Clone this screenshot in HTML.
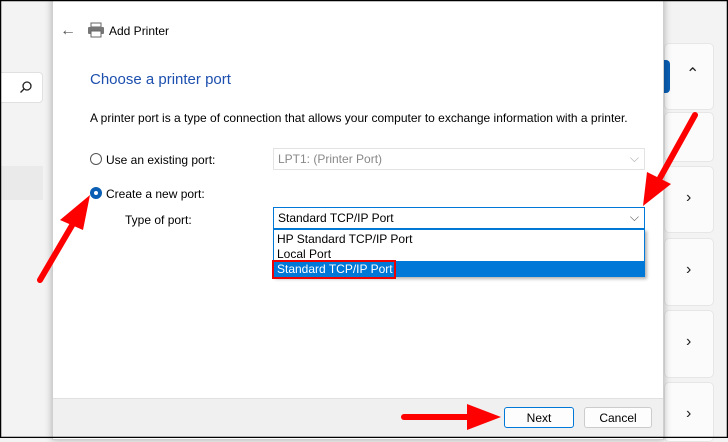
<!DOCTYPE html>
<html><head><style>
*{margin:0;padding:0;box-sizing:border-box}
body{width:728px;height:438px;overflow:hidden;background:#f3f3f3;font-family:"Liberation Sans",sans-serif;position:relative;font-size:12px;color:#000}
.abs{position:absolute}
.card{position:absolute;left:664px;width:50px;background:#fbfbfb;border:1px solid #e6e6e6;border-radius:5px}
.chev{position:absolute;left:686px;font-size:16px;color:#222}
.dlg{position:absolute;left:52px;top:-2px;width:612px;height:442px;background:#fff;border:1px solid #cfcfcf;box-shadow:-2px 0 6px rgba(0,0,0,.15),2px 0 6px rgba(0,0,0,.15)}
.sel{position:absolute;left:273px;width:372px;height:22px;border:1px solid #e3e3e3;padding:3px 4px;color:#888}
</style></head><body>
<div class="abs" style="left:0;top:72px;width:43px;height:31px;background:#fff;border:1px solid #e0e0e0;border-radius:0 4px 4px 0"></div>
<svg class="abs" style="left:19px;top:80px" width="14" height="14"><circle cx="8" cy="6" r="4" fill="none" stroke="#222" stroke-width="1.3"/><line x1="5" y1="9" x2="1.5" y2="12.5" stroke="#222" stroke-width="1.3"/></svg>
<div class="abs" style="left:0;top:166px;width:43px;height:34px;background:#eaeaea"></div>
<div class="card" style="top:43px;height:67px"></div>
<div class="card" style="top:112px;height:50px"></div>
<div class="card" style="top:166px;height:67px"></div>
<div class="card" style="top:238px;height:68px"></div>
<div class="card" style="top:310px;height:68px"></div>
<div class="card" style="top:382px;height:60px"></div>
<div class="abs" style="left:655px;top:60px;width:15px;height:33px;background:#0a5fb4;border-radius:4px"></div>
<div class="chev" style="top:64px">&#8963;</div>
<div class="chev" style="top:189px">›</div>
<div class="chev" style="top:261px">›</div>
<div class="chev" style="top:333px">›</div>
<div class="chev" style="top:405px">›</div>
<div class="dlg"></div>
<div class="abs" style="left:53px;top:398px;width:610px;height:40px;background:#f0f0f0;border-top:1px solid #e0e0e0"></div>
<div class="abs" style="left:60px;top:22px;font-size:16px;color:#555">←</div>
<svg class="abs" style="left:87px;top:22px" width="18" height="16"><rect x="4" y="1" width="10" height="4" fill="#fff" stroke="#666"/><rect x="1" y="5" width="16" height="7" rx="1" fill="#777"/><rect x="4" y="9" width="10" height="6" fill="#fff" stroke="#666"/></svg>
<div class="abs" style="left:109px;top:24px;font-size:12px">Add Printer</div>
<div class="abs" style="left:90px;top:71px;font-size:15px;color:#1c4fae">Choose a printer port</div>
<div class="abs" style="left:90px;top:111px">A printer port is a type of connection that allows your computer to exchange information with a printer.</div>
<div class="abs" style="left:90px;top:153px;width:12px;height:12px;border:1px solid #555;border-radius:50%"></div>
<div class="abs" style="left:106px;top:153px">Use an existing port:</div>
<div class="sel" style="top:148px">LPT1: (Printer Port)<span style="position:absolute;right:5px;top:2px;color:#aaa">⌵</span></div>
<div class="abs" style="left:90px;top:187px;width:12px;height:12px;border:4px solid #0a5fb4;border-radius:50%"></div>
<div class="abs" style="left:106px;top:187px">Create a new port:</div>
<div class="abs" style="left:125px;top:213px">Type of port:</div>
<div class="sel" style="top:207px;border-color:#0078d7;color:#000">Standard TCP/IP Port<span style="position:absolute;right:5px;top:2px;color:#555">⌵</span></div>
<div class="abs" style="left:273px;top:229px;width:372px;height:48px;background:#fff;border:1px solid #0078d7;box-shadow:2px 2px 3px rgba(0,0,0,.3)"></div>
<div class="abs" style="left:277px;top:232px">HP Standard TCP/IP Port</div>
<div class="abs" style="left:277px;top:247px">Local Port</div>
<div class="abs" style="left:274px;top:261px;width:370px;height:15px;background:#0078d7"></div>
<div class="abs" style="left:272px;top:260px;width:124px;height:19px;border:2px solid #e00"></div>
<div class="abs" style="left:277px;top:262px;color:#fff">Standard TCP/IP Port</div>
<div class="abs" style="left:504px;top:407px;width:70px;height:21px;border:1px solid #0078d7;border-radius:3px;background:#fdfdfd;text-align:center;padding-top:3px">Next</div>
<div class="abs" style="left:584px;top:407px;width:68px;height:21px;border:1px solid #ccc;border-radius:3px;background:#fdfdfd;text-align:center;padding-top:3px">Cancel</div>
<svg class="abs" style="left:0;top:0" width="728" height="438">
<line x1="40" y1="280" x2="74" y2="222" stroke="#f00" stroke-width="6" stroke-linecap="round"/>
<polygon points="90,195 60,220 83,230" fill="#f00"/>
<line x1="695" y1="115" x2="660" y2="178" stroke="#f00" stroke-width="6" stroke-linecap="round"/>
<polygon points="643,206 647,172 671,184" fill="#f00"/>
<line x1="404" y1="417" x2="470" y2="417" stroke="#f00" stroke-width="6" stroke-linecap="round"/>
<polygon points="501,417 467,404 467,430" fill="#f00"/>
<rect x="0.5" y="0.5" width="727" height="437" fill="none" stroke="#000" stroke-width="1.5"/>
</svg>
</body></html>
